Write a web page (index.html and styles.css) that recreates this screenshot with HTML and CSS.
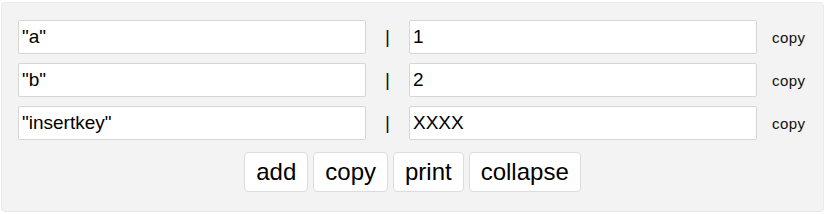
FILE: index.html
```html
<!DOCTYPE html>
<html>
<head>
<meta charset="utf-8">
<link rel="stylesheet" href="styles.css">
</head>
<body>
<div class="panel">
  <div class="rows">
    <div class="row">
      <input class="field" value="&quot;a&quot;">
      <span class="sep">|</span>
      <input class="field" value="1">
      <span class="copy">copy</span>
    </div>
    <div class="row">
      <input class="field" value="&quot;b&quot;">
      <span class="sep">|</span>
      <input class="field" value="2">
      <span class="copy">copy</span>
    </div>
    <div class="row">
      <input class="field" value="&quot;insertkey&quot;">
      <span class="sep">|</span>
      <input class="field" value="XXXX">
      <span class="copy">copy</span>
    </div>
  </div>
  <div class="actions">
    <button class="btn">add</button>
    <button class="btn">copy</button>
    <button class="btn">print</button>
    <button class="btn">collapse</button>
  </div>
</div>
</body>
</html>
```
FILE: styles.css
```css
html, body {
  margin: 0;
  padding: 0;
  background: #ffffff;
  font-family: "Liberation Sans", Arial, sans-serif;
}
.panel {
  box-sizing: border-box;
  width: 823px;
  height: 210px;
  margin: 2px 2px 2px 1px;
  padding: 17px 16px 19px 16px;
  background: #f3f3f3;
  border: 1px solid #e9e9e9;
  border-radius: 4px;
  display: flex;
  flex-direction: column;
}
.rows {
  display: flex;
  flex-direction: column;
  gap: 9px;
}
.row {
  display: flex;
  align-items: center;
  height: 34px;
}
.field {
  box-sizing: border-box;
  width: 348px;
  height: 34px;
  margin: 0;
  padding: 0 3px;
  border: 1px solid #d6d6d6;
  border-radius: 2px;
  background: #ffffff;
  font-family: "Liberation Sans", Arial, sans-serif;
  font-size: 19px;
  color: #000000;
  outline: none;
}
.sep {
  width: 43px;
  text-align: center;
  font-size: 19px;
  color: #111111;
}
.copy {
  margin-left: 15px;
  font-size: 15px;
  letter-spacing: 0.4px;
  color: #111111;
}
.actions {
  margin-top: 12px;
  display: flex;
  justify-content: center;
  gap: 5px;
}
.btn {
  box-sizing: border-box;
  height: 40px;
  margin: 0;
  padding: 0 11px;
  border: 1px solid #dcdcdc;
  border-radius: 4px;
  background: #ffffff;
  font-family: "Liberation Sans", Arial, sans-serif;
  font-size: 24px;
  color: #000000;
  line-height: 1;
}
```
